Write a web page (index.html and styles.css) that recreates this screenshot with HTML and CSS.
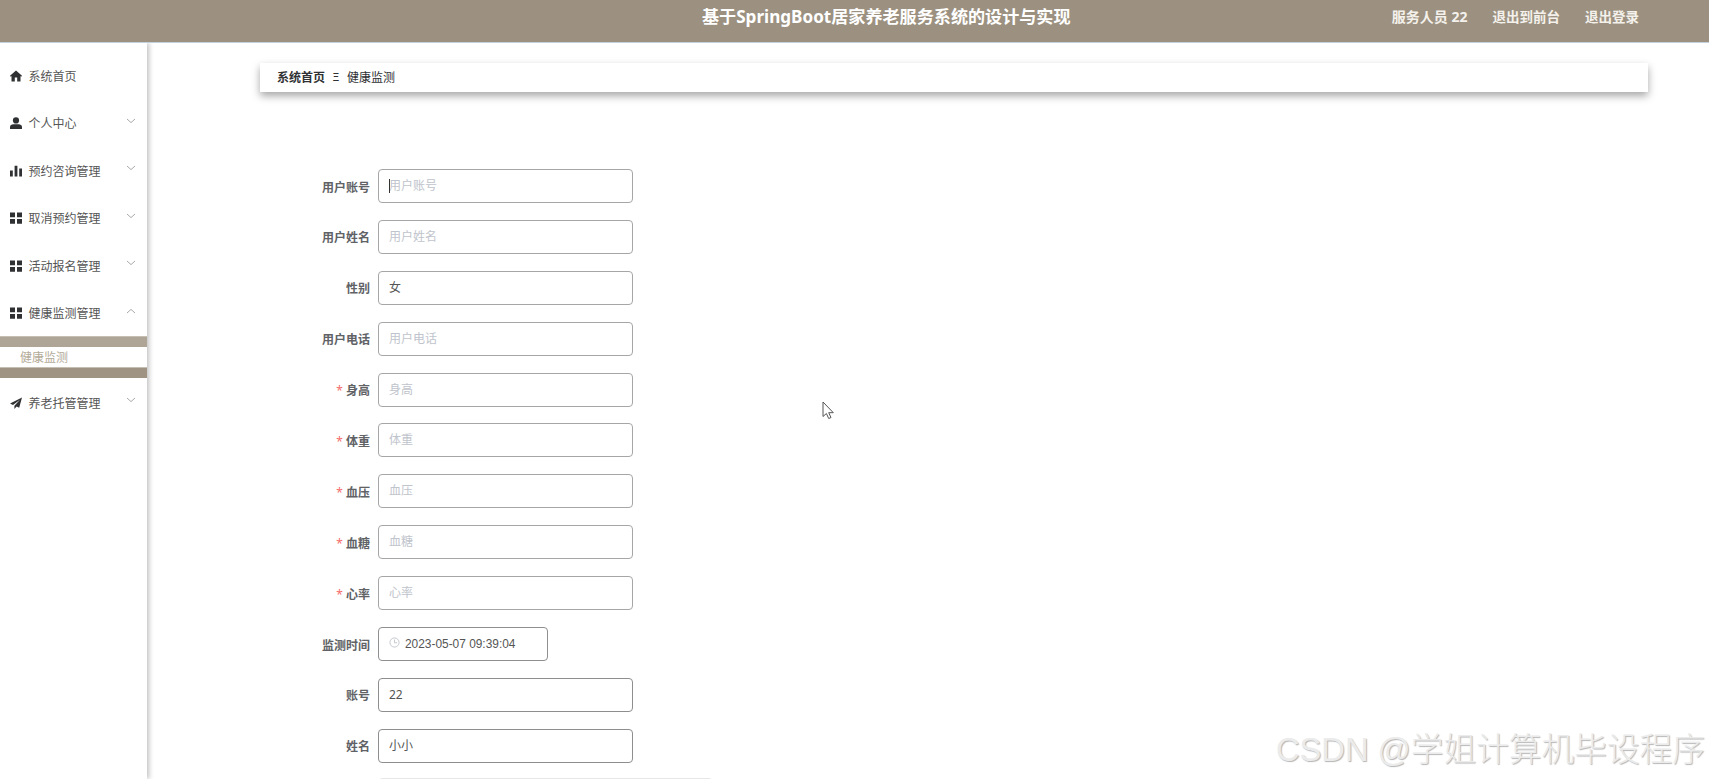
FILE: index.html
```html
<!DOCTYPE html>
<html lang="zh">
<head>
    <meta charset="UTF-8">
    <meta name="viewport" content="width=device-width, initial-scale=1.0">
    <title>健康监测</title>
    <link rel="stylesheet" href="styles.css">
</head>
<body>
    <svg class="defs" width="0" height="0">
        <symbol id="ikon-grid" viewBox="0 0 12 12"><path d="M0 .5h5v4.800H0zM7 .5h5v4.800H7zM0 7h5v4.800H0zM7 7h5v4.800H7z"/></symbol>
        <symbol id="ikon-down" viewBox="0 0 10 6"><path d="M1 1l4 3.600L9 1" fill="none" stroke="#a9a9a9" stroke-width="1"/></symbol>
        <symbol id="ikon-up" viewBox="0 0 10 6"><path d="M1 5l4-3.600L9 5" fill="none" stroke="#a9a9a9" stroke-width="1"/></symbol>
    </svg>

    <header class="topbar">
        <h1 class="judul">基于SpringBoot居家养老服务系统的设计与实现</h1>
        <nav class="topnav">
            <span class="nav-user">服务人员 22</span>
            <span>退出到前台</span>
            <span>退出登录</span>
        </nav>
    </header>

    <div class="isi">
        <aside class="sidebar">
            <div class="menu">
                <svg class="ikon" viewBox="0 0 12 12"><path d="M6 .6L0 5.800l.8.900.7-.6V11.400h3.300V7.600h2.400v3.800h3.300V6.100l.7.6.8-.9z"/></svg>
                <span class="menu-teks">系统首页</span>
            </div>
            <div class="menu">
                <svg class="ikon" viewBox="0 0 12 12"><circle cx="6" cy="3.400" r="3.100"/><path d="M0 12V10C0 8 1.600 7.200 3.400 7.200h5.200C10.400 7.200 12 8 12 10v2z"/></svg>
                <span class="menu-teks">个人中心</span>
                <svg class="panah"><use href="#ikon-down"/></svg>
            </div>
            <div class="menu">
                <svg class="ikon" viewBox="0 0 12 12"><path d="M0 5.500h2.800V11.500H0zM4.600 .8h2.800v10.700H4.600zM9.200 3.500H12v8H9.200z"/></svg>
                <span class="menu-teks">预约咨询管理</span>
                <svg class="panah"><use href="#ikon-down"/></svg>
            </div>
            <div class="menu">
                <svg class="ikon"><use href="#ikon-grid"/></svg>
                <span class="menu-teks">取消预约管理</span>
                <svg class="panah"><use href="#ikon-down"/></svg>
            </div>
            <div class="menu">
                <svg class="ikon"><use href="#ikon-grid"/></svg>
                <span class="menu-teks">活动报名管理</span>
                <svg class="panah"><use href="#ikon-down"/></svg>
            </div>
            <div class="menu">
                <svg class="ikon"><use href="#ikon-grid"/></svg>
                <span class="menu-teks">健康监测管理</span>
                <svg class="panah"><use href="#ikon-up"/></svg>
            </div>
            <div class="submenu">
                <div class="strip strip-terang"></div>
                <div class="submenu-item">健康监测</div>
                <div class="strip"></div>
            </div>
            <div class="menu">
                <svg class="ikon" viewBox="0 0 12 12"><path d="M12 .4L0 6.600l3 1.400L10 2.800 4.400 8.800v3.200l2.200-2.500 2.600 1.200z"/></svg>
                <span class="menu-teks">养老托管管理</span>
                <svg class="panah"><use href="#ikon-down"/></svg>
            </div>
        </aside>

        <main class="konten">
            <div class="breadcrumb">
                <b>系统首页</b>
                <span class="pemisah">Ξ</span>
                <span>健康监测</span>
            </div>

            <form class="form-data">
                <div class="baris">
                    <label class="label">用户账号</label>
                    <div class="kolom">
                        <input class="input" type="text" placeholder="用户账号">
                        <i class="kursor-teks"></i>
                    </div>
                </div>
                <div class="baris">
                    <label class="label">用户姓名</label>
                    <input class="input" type="text" placeholder="用户姓名">
                </div>
                <div class="baris">
                    <label class="label">性别</label>
                    <input class="input" type="text" value="女">
                </div>
                <div class="baris">
                    <label class="label">用户电话</label>
                    <input class="input" type="text" placeholder="用户电话">
                </div>
                <div class="baris">
                    <label class="label"><em>*</em>身高</label>
                    <input class="input" type="text" placeholder="身高">
                </div>
                <div class="baris">
                    <label class="label"><em>*</em>体重</label>
                    <input class="input" type="text" placeholder="体重">
                </div>
                <div class="baris">
                    <label class="label"><em>*</em>血压</label>
                    <input class="input" type="text" placeholder="血压">
                </div>
                <div class="baris">
                    <label class="label"><em>*</em>血糖</label>
                    <input class="input" type="text" placeholder="血糖">
                </div>
                <div class="baris">
                    <label class="label"><em>*</em>心率</label>
                    <input class="input" type="text" placeholder="心率">
                </div>
                <div class="baris">
                    <label class="label">监测时间</label>
                    <div class="input-tanggal">
                        <svg class="jam" viewBox="0 0 12 12"><circle cx="6" cy="6" r="5" fill="none" stroke="#c0c4cc"/><path d="M6 2.800V6.300h2.800" fill="none" stroke="#c0c4cc"/></svg>
                        <span>2023-05-07 09:39:04</span>
                    </div>
                </div>
                <div class="baris">
                    <label class="label">账号</label>
                    <input class="input input-gelap" type="text" value="22">
                </div>
                <div class="baris baris-nama">
                    <label class="label">姓名</label>
                    <input class="input input-gelap" type="text" value="小小">
                </div>
                <div class="baris">
                    <label class="label"></label>
                    <div class="kotak-bawah"></div>
                </div>
            </form>
        </main>
    </div>

    <svg class="kursor" viewBox="0 0 14 20"><path d="M1 1v14.500l3.400-3 2.300 5 2.300-1-2.300-4.800h4.600z" fill="#fff" stroke="#555" stroke-width="1"/></svg>
    <div class="watermark">CSDN @学姐计算机毕设程序</div>
</body>
</html>
```

FILE: styles.css
```css
* {
  box-sizing: border-box;
}

html, body {
  height: 100%;
}

body {
  margin: 0;
  overflow: hidden;
  background-color: #fff;
  color: #606266;
  font-family: "Noto Sans", "Noto Sans CJK SC", sans-serif;
  font-size: 12px;
  display: flex;
  flex-direction: column;
}

.defs {
  display: none;
}

.topbar {
  height: 43px;
  flex-shrink: 0;
  background-color: #9c9180;
  border-bottom: 1px solid #c4d0dc;
  color: #fff;
  position: relative;
  z-index: 2;
  display: flex;
  align-items: flex-start;
  justify-content: flex-end;
  padding: 6px 70px 0 0;
}

.judul {
  flex: 1;
  margin: 0;
  padding-left: 702px;
  font-size: 17.100px;
  line-height: 22px;
  font-weight: 700;
  white-space: nowrap;
}

.topnav {
  display: flex;
  gap: 25px;
  font-size: 13.500px;
  line-height: 22px;
  font-weight: 700;
  color: #f4f1ec;
}

.nav-user {
  font-size: 14px;
}

.isi {
  flex: 1;
  display: flex;
  min-height: 0;
}

.sidebar {
  width: 147px;
  flex-shrink: 0;
  padding-top: 9px;
  background-color: #fff;
  box-shadow: 2px 0 5px rgba(0, 0, 0, 0.25);
}

.menu {
  height: 47.500px;
  display: flex;
  align-items: center;
  padding: 0 11px 0 10px;
  color: #555;
}

.ikon {
  width: 12px;
  height: 12px;
  margin-right: 6.500px;
  fill: #2f3133;
}

.menu-teks {
  flex: 1;
}

.panah {
  width: 10px;
  height: 6px;
  margin-top: -5px;
}

.submenu {
  margin-top: -1px;
}

.strip {
  height: 11px;
  background-color: #9f9484;
  border-top: 1px solid #c4beb3;
}

.strip-terang {
  background-color: #aea596;
}

.submenu-item {
  height: 20px;
  line-height: 21px;
  padding-left: 20px;
  color: #b3ab99;
}

.submenu + .menu {
  margin-top: 1px;
}

.konten {
  flex: 1;
  min-width: 0;
  padding: 20px 61px 0 113px;
  overflow: hidden;
}

.breadcrumb {
  height: 29px;
  display: flex;
  align-items: center;
  padding: 0 0 2px 17px;
  background-color: #fff;
  color: #303133;
  box-shadow: 0 4px 8px rgba(0, 0, 0, 0.35);
}

.pemisah {
  width: 22px;
  text-align: center;
  font-size: 11px;
}

.form-data {
  padding-top: 77px;
}

.baris {
  display: flex;
  align-items: center;
  margin-bottom: 16.900px;
}

.baris-nama {
  margin-bottom: 15px;
}

.label {
  width: 110px;
  margin-right: 8px;
  padding-top: 1px;
  text-align: right;
  font-weight: 700;
  color: #606266;
}

.label em {
  margin-right: 3px;
  font-style: normal;
  font-weight: 400;
  color: #f56c6c;
}

.kolom {
  position: relative;
}

.input {
  display: block;
  width: 255px;
  height: 34px;
  padding: 0 10px 1px;
  border: 1.500px solid #a6a6a6;
  border-radius: 4px;
  background-color: #fff;
  color: #555;
  font-family: inherit;
  font-size: 12px;
  outline: none;
}

.input::placeholder {
  color: #c0c4cc;
}

.input-gelap {
  border-color: #8e8e8e;
}

.kursor-teks {
  position: absolute;
  left: 11px;
  top: 10px;
  width: 1px;
  height: 14px;
  background-color: #333;
}

.input-tanggal {
  width: 170px;
  height: 34px;
  display: flex;
  align-items: center;
  padding: 0 0 1px 10px;
  border: 1.500px solid #8f8f8f;
  border-radius: 4px;
  color: #555;
  font-family: "Liberation Sans", sans-serif;
  font-size: 11.900px;
}

.jam {
  width: 11px;
  height: 11px;
  margin-right: 5px;
  margin-top: -2px;
}

.kotak-bawah {
  width: 335px;
  height: 34px;
  border: 1px solid #e6e6e6;
  border-radius: 4px;
}

.kursor {
  position: absolute;
  left: 822px;
  top: 401px;
  width: 14px;
  height: 20px;
}

.watermark {
  position: absolute;
  right: 4px;
  top: 729px;
  font-family: "Liberation Sans", "Noto Sans CJK SC", sans-serif;
  font-size: 32.700px;
  font-weight: 300;
  line-height: 42px;
  white-space: nowrap;
  color: #ebebeb;
  text-shadow: 1px 1px 1px #b5b5b5;
}
```
